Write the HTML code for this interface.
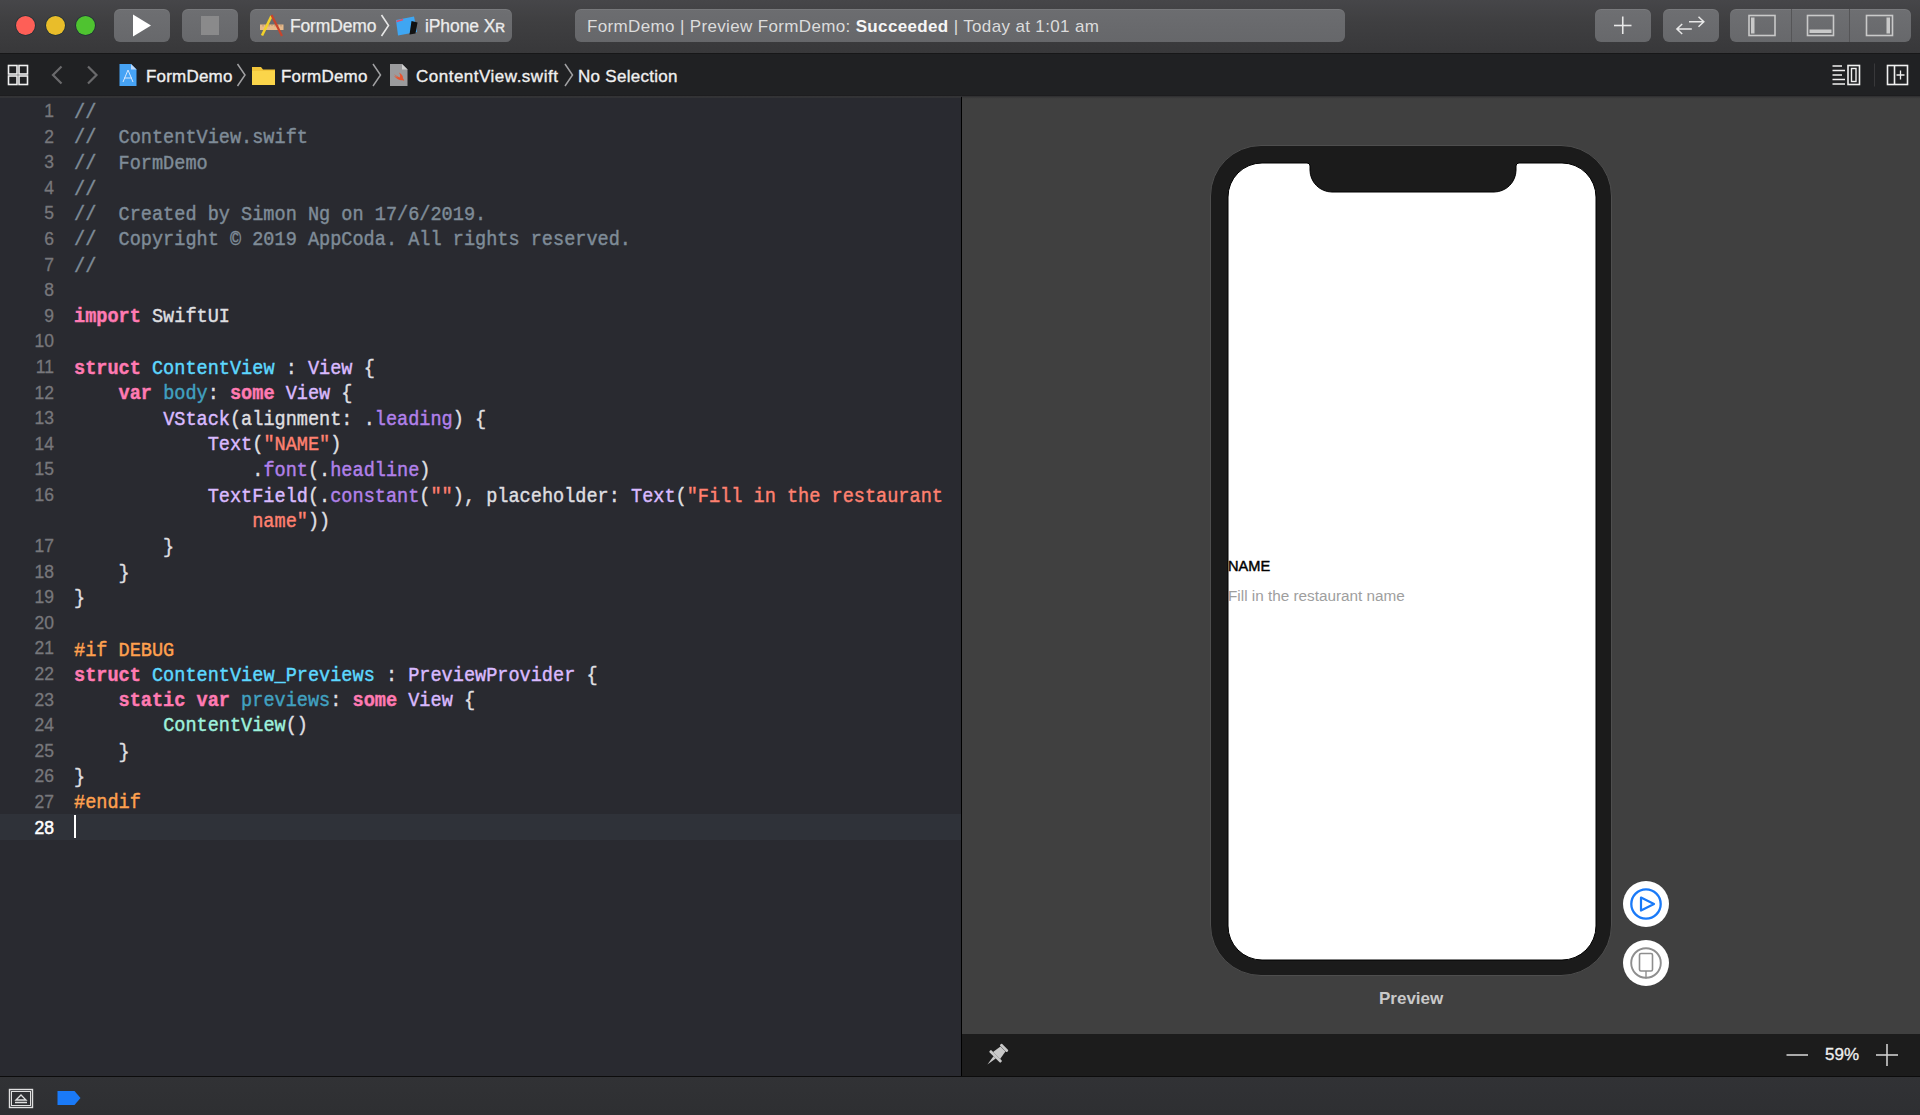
<!DOCTYPE html>
<html><head><meta charset="utf-8">
<style>
*{margin:0;padding:0;box-sizing:border-box}
html,body{width:1920px;height:1115px;overflow:hidden;background:#292a30;font-family:"Liberation Sans",sans-serif}
.a{position:absolute}
svg{position:absolute;overflow:visible}
#toolbar{left:0;top:0;width:1920px;height:53px;background:linear-gradient(#464649,#3f3f41 40%,#38383a)}
#tbline{left:0;top:53px;width:1920px;height:1px;background:#171718}
.light{width:19px;height:19px;border-radius:50%;box-shadow:0 0 0 0.8px rgba(10,40,50,0.55)}
.btn{background:linear-gradient(#6e6f72,#67686b);border-radius:6px;height:33px;top:9px;box-shadow:inset 0 1px 0 rgba(255,255,255,0.08)}
#jump{left:0;top:54px;width:1920px;height:42px;background:#202123}
#jline{left:0;top:95px;width:961px;height:3px;background:linear-gradient(#1d1d1f 0,#1d1d1f 33%,#303032 33%,#363638 66%,#2f3034 100%)}
#cshadow{left:962px;top:95px;width:958px;height:4px;background:linear-gradient(#1d1d1f 0,#1d1d1f 25%,#2c2c2e 25%,#363637 50%,#3d3d3d 75%,#404040 100%)}
#editor{left:0;top:98px;width:961px;height:978px;background:#292a30}
#vsep{left:961px;top:97px;width:1px;height:979px;background:#000}
#canvas{left:962px;top:96px;width:958px;height:938px;background:#404040}
#pbar{left:962px;top:1034px;width:958px;height:42px;background:#1c1c1c}
#hline{left:0;top:1076px;width:1920px;height:1px;background:#0c0c0c}
#status{left:0;top:1077px;width:1920px;height:38px;background:linear-gradient(#313235,#2e2f32)}
.codewrap{left:74px;top:99.5px;transform-origin:0 0;transform:scaleY(1.1)}
.code{font-family:"Liberation Mono",monospace;font-size:18.57px;line-height:23.2727px;white-space:pre;color:#dfdfe0;-webkit-text-stroke:0.4px currentColor}
.ln{font-family:"Liberation Sans",sans-serif;font-size:17.5px;line-height:25.6px;color:#77777b;text-align:right;width:54px;left:0;top:99px;-webkit-text-stroke:0.3px currentColor}
.c{color:#7f8c98}
.k{color:#ff7ab2;font-weight:bold}
.s{color:#ff8170}
.td{color:#5dd8ff}
.ot{color:#dabaff}
.of{color:#b281eb}
.od{color:#41a1c0}
.pc{color:#9ef1dd}
.pp{color:#ffa14f}
.tbtext{font-size:17.5px;color:#ececec;line-height:20px;white-space:nowrap;-webkit-text-stroke:0.25px currentColor}
.jt{font-size:17px;color:#f0f0f0;line-height:20px;white-space:nowrap;-webkit-text-stroke:0.35px currentColor}
</style></head><body>
<div id="toolbar" class="a"></div>
<div id="tbline" class="a"></div>
<div class="a light" style="left:16px;top:16px;background:#fe5f57"></div>
<div class="a light" style="left:46px;top:16px;background:#e9bd2a"></div>
<div class="a light" style="left:76px;top:16px;background:#4fc330"></div>
<div class="a btn" style="left:114px;width:56px"></div>
<svg style="left:0;top:0" width="1" height="1"><path d="M133 14.5 L151 25.5 L133 36.5Z" fill="#fff"/></svg>
<div class="a btn" style="left:182px;width:56px"></div>
<div class="a" style="left:201px;top:16px;width:18px;height:19px;background:#8a8a8b"></div>
<div class="a btn" style="left:250px;width:262px"></div>
<svg style="left:0;top:0" width="1" height="1">
 <rect x="260" y="24.5" width="23.5" height="5.5" fill="#e6b98a"/><path d="M263 24.5 V26.5 M266 24.5 V26 M269 24.5 V26.5 M272 24.5 V26 M275 24.5 V26.5 M278 24.5 V26 M281 24.5 V26.5" stroke="#a88560" stroke-width="0.8"/>
 <line x1="262" y1="35.5" x2="271.5" y2="16" stroke="#f2d12a" stroke-width="2.6"/>
 <line x1="271.5" y1="15" x2="282" y2="36" stroke="#c8442c" stroke-width="2.2"/>
 <path d="M381.5 15 L388.5 25.5 L381.5 36" stroke="#e6e6e6" stroke-width="1.6" fill="none"/>
 <path d="M396 20 L414 16.5 L417 32 L398 35.5Z" fill="#3fa6f2"/><path d="M396.5 21.5 L403 19.5" stroke="#e0506a" stroke-width="1.5"/>
 <path d="M411.5 21 L417.5 22.5 L415.5 33.5 L409.5 34.5Z" fill="#111"/>
</svg>
<div class="a tbtext" style="left:290px;top:16px;letter-spacing:-0.15px">FormDemo</div>
<div class="a tbtext" style="left:425px;top:16px;letter-spacing:-0.1px">iPhone X<span style="font-size:13.5px;-webkit-text-stroke:0.5px #ececec;letter-spacing:0">R</span></div>
<div class="a btn" style="left:575px;width:770px;background:linear-gradient(#6c6d70,#66676a)"></div>
<div class="a tbtext" style="left:587px;top:16.5px;color:#dcdcdc;letter-spacing:0.35px;font-size:17px;-webkit-text-stroke:0">FormDemo | Preview FormDemo: <b style="color:#f6f6f6">Succeeded</b> | Today at 1:01 am</div>
<div class="a btn" style="left:1595px;width:56px"></div>
<div class="a btn" style="left:1663px;width:56px"></div>
<div class="a btn" style="left:1730px;width:181px"></div>
<svg style="left:0;top:0" width="1" height="1" stroke="#e8e8e8" fill="none">
 <line x1="1614" y1="25.5" x2="1631.5" y2="25.5" stroke-width="1.6"/>
 <line x1="1622.75" y1="16.5" x2="1622.75" y2="34" stroke-width="1.6"/>
 <path d="M1689 21.7 H1703.5 M1698.5 16.7 L1703.8 21.7 L1698.5 26.7" stroke-width="1.5"/>
 <path d="M1691.8 29 H1677.2 M1682.2 24 L1676.9 29 L1682.2 34" stroke-width="1.5"/>
 <line x1="1791.5" y1="9" x2="1791.5" y2="42" stroke="#555557" stroke-width="1"/>
 <line x1="1849.5" y1="9" x2="1849.5" y2="42" stroke="#555557" stroke-width="1"/>
 <rect x="1749" y="15.5" width="26" height="20" stroke="#c9c9c9" stroke-width="1.6"/>
 <rect x="1751" y="17.5" width="3.5" height="16" fill="#c9c9c9" stroke="none"/>
 <rect x="1807.5" y="15.5" width="26" height="20" stroke="#c9c9c9" stroke-width="1.6"/>
 <rect x="1809.5" y="29.5" width="22" height="3.5" fill="#c9c9c9" stroke="none"/>
 <rect x="1866.5" y="15.5" width="26" height="20" stroke="#c9c9c9" stroke-width="1.6"/>
 <rect x="1886.5" y="17.5" width="3.5" height="16" fill="#c9c9c9" stroke="none"/>
</svg>

<div id="jump" class="a"></div>
<div id="jline" class="a"></div>
<svg style="left:0;top:0" width="1" height="1" fill="none">
 <g stroke="#f0f0f0" stroke-width="1.6">
  <rect x="8.5" y="65.5" width="8.5" height="8.5"/><rect x="19" y="65.5" width="8.5" height="8.5"/>
  <rect x="8.5" y="76" width="8.5" height="8.5"/><rect x="19" y="76" width="8.5" height="8.5"/>
 </g>
 <path d="M61.5 66.5 L53 75 L61.5 83.5" stroke="#6a6a6c" stroke-width="2.2"/>
 <path d="M88 66.5 L96.5 75 L88 83.5" stroke="#6a6a6c" stroke-width="2.2"/>
 <path d="M119.5 64 H131 L136.5 69.5 V86 H119.5Z" fill="#46a3f5"/>
 <path d="M131 64 V69.5 H136.5" fill="#bcd8fb"/>
 <path d="M123 82 L128 70 L133 82 M124 78 H132" stroke="#d6e8ff" stroke-width="1"/>
 <path d="M237.5 64 L245 75 L237.5 86" stroke="#a0a0a2" stroke-width="1.5"/>
 <path d="M252 67 H261 L263 69.5 H275 V85 H252Z" fill="#f2c53a"/>
 <rect x="252" y="71" width="23" height="14" fill="#fbd54a"/>
 <path d="M373 64 L380.5 75 L373 86" stroke="#a0a0a2" stroke-width="1.5"/>
 <path d="M390 64 H402 L407.5 69.5 V86 H390Z" fill="#9b9b9d"/>
 <path d="M402 64 V69.5 H407.5" fill="#cfcfcf"/>
 <g transform="translate(392.5 71.5) scale(13 11)"><path d="M0.8 0.62 C0.85 0.45 0.7 0.25 0.5 0.1 C0.6 0.3 0.62 0.45 0.55 0.55 C0.4 0.45 0.2 0.3 0.1 0.2 C0.25 0.4 0.35 0.5 0.42 0.58 C0.3 0.52 0.15 0.42 0.08 0.35 C0.25 0.6 0.45 0.8 0.65 0.8 C0.75 0.8 0.8 0.75 0.9 0.85 C0.88 0.75 0.84 0.68 0.8 0.62Z" fill="#e9542f"/></g>
 <path d="M565 64 L572.5 75 L565 86" stroke="#a0a0a2" stroke-width="1.5"/>
 <g stroke="#f0f0f0" stroke-width="1.6">
  <path d="M1832.5 66 H1842 M1832.5 70.5 H1845 M1832.5 75 H1842 M1832.5 79.5 H1845 M1832.5 84 H1845"/>
  <rect x="1848" y="65.5" width="11.5" height="19"/>
  <rect x="1851.5" y="68.5" width="4.5" height="13" stroke-width="1.4"/>
  <rect x="1887.5" y="65.5" width="20" height="19"/>
  <line x1="1894.5" y1="66" x2="1894.5" y2="84"/>
  <path d="M1900.5 70.5 V79.5 M1896.5 75 H1904.5" stroke-width="1.3"/>
 </g>
 <line x1="1874.5" y1="63.5" x2="1874.5" y2="86.5" stroke="#38383a" stroke-width="1"/>
</svg>
<div class="a jt" style="left:146px;top:66.5px;letter-spacing:0.2px">FormDemo</div>
<div class="a jt" style="left:281px;top:66.5px;letter-spacing:0.2px">FormDemo</div>
<div class="a jt" style="left:416px;top:66.5px;letter-spacing:0.5px">ContentView.swift</div>
<div class="a jt" style="left:578px;top:66.5px;letter-spacing:0.28px">No Selection</div>

<div id="editor" class="a"></div>
<div class="a" style="left:0;top:814px;width:961px;height:25.6px;background:#2f3239"></div>
<div class="a ln">1<br>2<br>3<br>4<br>5<br>6<br>7<br>8<br>9<br>10<br>11<br>12<br>13<br>14<br>15<br>16<br><br>17<br>18<br>19<br>20<br>21<br>22<br>23<br>24<br>25<br>26<br>27<br><span style="color:#fff;-webkit-text-stroke:0.5px #fff">28</span></div>
<div class="a codewrap"><div class="code"><span class="c">//</span>
<span class="c">//  ContentView.swift</span>
<span class="c">//  FormDemo</span>
<span class="c">//</span>
<span class="c">//  Created by Simon Ng on 17/6/2019.</span>
<span class="c">//  Copyright © 2019 AppCoda. All rights reserved.</span>
<span class="c">//</span>

<span class="k">import</span> SwiftUI

<span class="k">struct</span> <span class="td">ContentView</span> : <span class="ot">View</span> {
    <span class="k">var</span> <span class="od">body</span>: <span class="k">some</span> <span class="ot">View</span> {
        <span class="ot">VStack</span>(alignment: .<span class="of">leading</span>) {
            <span class="ot">Text</span>(<span class="s">"NAME"</span>)
                .<span class="of">font</span>(.<span class="of">headline</span>)
            <span class="ot">TextField</span>(.<span class="of">constant</span>(<span class="s">""</span>), placeholder: <span class="ot">Text</span>(<span class="s">"Fill in the restaurant</span>
                <span class="s">name"</span>))
        }
    }
}

<span class="pp">#if DEBUG</span>
<span class="k">struct</span> <span class="td">ContentView_Previews</span> : <span class="ot">PreviewProvider</span> {
    <span class="k">static</span> <span class="k">var</span> <span class="od">previews</span>: <span class="k">some</span> <span class="ot">View</span> {
        <span class="pc">ContentView</span>()
    }
}
<span class="pp">#endif</span>
</div></div>
<div class="a" style="left:74px;top:815px;width:2px;height:23px;background:#fff"></div>

<div id="vsep" class="a"></div>
<div id="canvas" class="a"></div>
<div id="cshadow" class="a"></div>
<svg style="left:0;top:0" width="1" height="1">
 <rect x="1210.5" y="145.5" width="401" height="830" rx="50.5" fill="#1b1b1b" stroke="#4e4e4e" stroke-width="1"/>
 <path d="M1262 163 H1307 Q1310 163 1310 166 V170 A22 22 0 0 0 1332 192 H1494 A22 22 0 0 0 1516 170 V166 Q1516 163 1519 163 H1562 A34 34 0 0 1 1596 197 V926 A34 34 0 0 1 1562 960 H1262 A34 34 0 0 1 1228 926 V197 A34 34 0 0 1 1262 163Z" fill="#fff" stroke="#000" stroke-width="1"/>
 <circle cx="1646" cy="904" r="23" fill="#fff"/>
 <circle cx="1646" cy="904" r="14.7" fill="none" stroke="#1a7af8" stroke-width="2.3"/>
 <path d="M1641 897.5 L1654 904 L1641 910.5Z" fill="none" stroke="#1a7af8" stroke-width="2.2" stroke-linejoin="round"/>
 <circle cx="1646" cy="963" r="23" fill="#fff"/>
 <circle cx="1646" cy="963" r="14.8" fill="none" stroke="#8e8e8e" stroke-width="1.9"/>
 <rect x="1639.5" y="953.5" width="13" height="17.5" rx="1.5" fill="none" stroke="#8e8e8e" stroke-width="1.6"/>
 <line x1="1646" y1="971" x2="1646" y2="978.5" stroke="#8e8e8e" stroke-width="1.4"/>
</svg>
<div class="a" style="left:1228px;top:557px;font-size:14.6px;color:#000;line-height:18px;-webkit-text-stroke:0.45px #000">NAME</div>
<div class="a" style="left:1228px;top:586px;font-size:15.3px;color:#9e9e9e;line-height:20px;white-space:nowrap">Fill in the restaurant name</div>
<div class="a" style="left:1379px;top:988.5px;font-size:17px;font-weight:bold;color:#c9c9c9;line-height:20px">Preview</div>

<div id="pbar" class="a"></div>
<svg style="left:0;top:0" width="1" height="1">
 <g transform="translate(998 1054) rotate(45)">
  <rect x="-5" y="-10" width="10" height="2.8" rx="1" fill="#c8c8c8"/>
  <path d="M-3.5 -7 H3.5 L5 2 H-5Z" fill="#c8c8c8"/>
  <rect x="-8" y="2" width="16" height="2.8" rx="1" fill="#c8c8c8"/>
  <path d="M-1.6 4.8 L0 15 L1.6 4.8Z" fill="#c8c8c8"/>
 </g>
 <line x1="1786.5" y1="1055" x2="1808" y2="1055" stroke="#cfcfcf" stroke-width="1.6"/>
 <line x1="1876" y1="1055" x2="1898" y2="1055" stroke="#cfcfcf" stroke-width="1.6"/>
 <line x1="1887" y1="1044" x2="1887" y2="1066" stroke="#cfcfcf" stroke-width="1.6"/>
</svg>
<div class="a" style="left:1825px;top:1045px;font-size:17px;color:#efefef;line-height:20px;-webkit-text-stroke:0.3px #efefef">59%</div>
<div id="hline" class="a"></div>
<div id="status" class="a"></div>
<svg style="left:0;top:0" width="1" height="1" fill="none">
 <rect x="9.5" y="1089.5" width="23" height="18" stroke="#e0e0e0" stroke-width="1.4"/>
 <rect x="11.5" y="1091.5" width="19" height="14" stroke="#e0e0e0" stroke-width="1"/><path d="M16 1100 L21 1095 L26 1100Z M15 1102.5 H27" stroke="#e0e0e0" stroke-width="1.3"/>
 <path d="M57.5 1091 H74.5 L80.5 1098 L74.5 1105 H57.5Z" fill="#1a7af8"/>
</svg>
</body></html>
